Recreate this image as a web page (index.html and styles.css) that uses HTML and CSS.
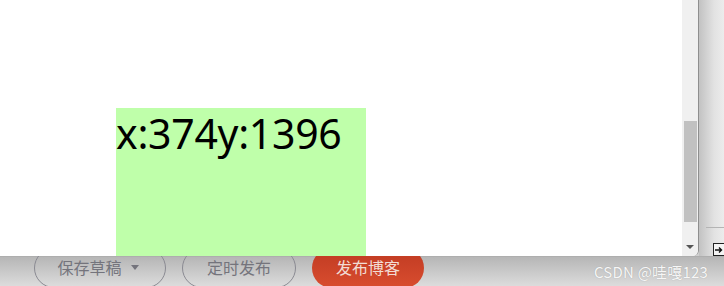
FILE: index.html
```html
<!DOCTYPE html>
<html lang="zh">
<head>
<meta charset="utf-8">
<link rel="stylesheet" href="styles.css">
</head>
<body>
<div class="stage">
  <div class="panel">
    <div class="content">
      <div class="green">x:374y:1396</div>
    </div>
    <div class="scrollbar">
      <div class="thumb"></div>
      <div class="arrow"></div>
    </div>
  </div>
  <div class="side">
    <div class="side-line"></div>
    <div class="side-icon">
      <svg width="10" height="8" viewBox="0 0 10 8"><path d="M1 4h6M5 1.5 7.5 4 5 6.5" fill="none" stroke="#111" stroke-width="1.4"/></svg>
    </div>
  </div>
</div>
<div class="bar">
  <div class="pill outline wide">保存草稿<span class="caret"></span></div>
  <div class="pill outline">定时发布</div>
  <div class="pill red">发布博客</div>
  <div class="mark">CSDN @哇嘎123</div>
</div>
</body>
</html>
```
FILE: styles.css
```css
html, body {
  margin: 0;
  padding: 0;
}
body {
  width: 724px;
  height: 286px;
  overflow: hidden;
  background: #d0d0d0;
  font-family: "Noto Sans CJK SC", "Noto Sans", sans-serif;
}
.stage {
  display: flex;
  height: 256px;
}
.panel {
  width: 699px;
  display: flex;
  background: #fff;
  border-right: 1px solid #8e8e8e;
  border-bottom-right-radius: 6px;
  overflow: hidden;
  box-sizing: border-box;
}
.content {
  flex: 1;
  padding: 108px 0 0 116px;
}
.green {
  width: 250px;
  height: 148px;
  background: #bfffaa;
  font-family: "Noto Sans", sans-serif;
  font-size: 41px;
  line-height: 50px;
  color: #000;
  letter-spacing: -0.3px;
}
.scrollbar {
  width: 16px;
  background: #f0f0f0;
  display: flex;
  flex-direction: column;
  align-items: center;
  padding-top: 121px;
  box-sizing: border-box;
}
.thumb {
  width: 13px;
  height: 101px;
  background: #c1c1c1;
  margin-left: 1px;
}
.arrow {
  margin-top: 23px;
  width: 0;
  height: 0;
  border-left: 4px solid transparent;
  border-right: 4px solid transparent;
  border-top: 4px solid #555;
}
.side {
  flex: 1;
  background: linear-gradient(to right, #c2c2c2, #e2e2e2 60%, #ececec);
  display: flex;
  flex-direction: column;
  align-items: flex-end;
}
.side-line {
  margin-top: 227px;
  width: 18px;
  height: 1px;
  background: #b4b4b4;
}
.side-icon {
  margin-top: 15px;
  width: 11px;
  height: 13px;
  border: 1px solid #222;
  border-right: none;
  box-sizing: border-box;
  display: flex;
  align-items: center;
  justify-content: center;
  background: #f4f4f4;
}
.bar {
  height: 30px;
  overflow: hidden;
  display: flex;
  align-items: flex-start;
  padding-left: 34px;
  gap: 16px;
  background: linear-gradient(to bottom, #a6a6a6 0, #b6b6b6 1px, #dcdcdc);
}
.pill {
  margin-top: -8px;
  height: 40px;
  border-radius: 20px;
  box-sizing: border-box;
  display: flex;
  align-items: center;
  justify-content: center;
  font-size: 16px;
  padding-bottom: 3px;
}
.outline {
  width: 114px;
  border: 1px solid #8a8a92;
  color: #74747c;
}
.outline.wide {
  width: 132px;
  padding-right: 4px;
}
.caret {
  display: inline-block;
  margin-left: 9px;
  margin-top: 2px;
  border-left: 4px solid transparent;
  border-right: 4px solid transparent;
  border-top: 5px solid #74747c;
}
.red {
  width: 112px;
  background: linear-gradient(to bottom, #bf3a22, #d94d2f);
  color: #f2dcd4;
}
.mark {
  margin-left: auto;
  margin-right: 16px;
  margin-top: 5px;
  font-size: 15px;
  color: #f6f6f6;
  text-shadow: 0 0 1px #9a9a9a;
  letter-spacing: 0.2px;
}
```
